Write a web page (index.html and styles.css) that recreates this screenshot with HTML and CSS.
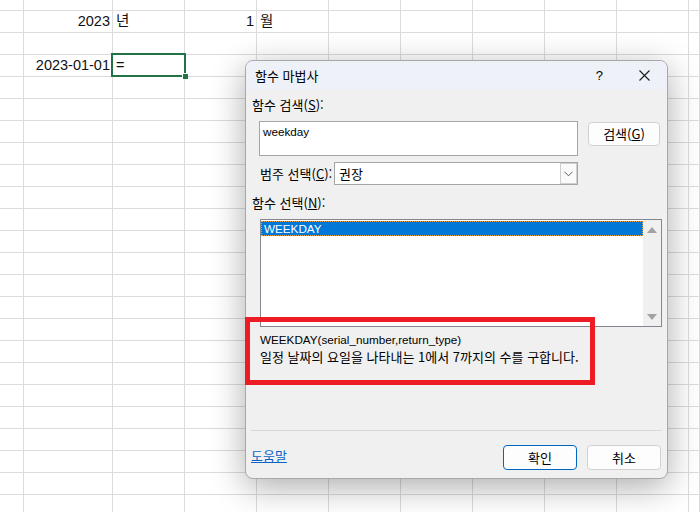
FILE: index.html
```html
<!DOCTYPE html>
<html lang="ko">
<head>
<meta charset="utf-8">
<link rel="stylesheet" href="styles.css">
</head>
<body>
<div class="sheet">
<div></div><div></div><div></div><div></div><div></div><div></div><div></div><div></div><div></div><div></div><div></div>
<div></div><div class="num">2023</div><div>년</div><div class="num">1</div><div>월</div><div></div><div></div><div></div><div></div><div></div><div></div>
<div></div><div></div><div></div><div></div><div></div><div></div><div></div><div></div><div></div><div></div><div></div>
<div></div><div class="num">2023-01-01</div><div>=</div><div></div><div></div><div></div><div></div><div></div><div></div><div></div><div></div>
<div></div><div></div><div></div><div></div><div></div><div></div><div></div><div></div><div></div><div></div><div></div>
<div></div><div></div><div></div><div></div><div></div><div></div><div></div><div></div><div></div><div></div><div></div>
<div></div><div></div><div></div><div></div><div></div><div></div><div></div><div></div><div></div><div></div><div></div>
<div></div><div></div><div></div><div></div><div></div><div></div><div></div><div></div><div></div><div></div><div></div>
<div></div><div></div><div></div><div></div><div></div><div></div><div></div><div></div><div></div><div></div><div></div>
<div></div><div></div><div></div><div></div><div></div><div></div><div></div><div></div><div></div><div></div><div></div>
<div></div><div></div><div></div><div></div><div></div><div></div><div></div><div></div><div></div><div></div><div></div>
<div></div><div></div><div></div><div></div><div></div><div></div><div></div><div></div><div></div><div></div><div></div>
<div></div><div></div><div></div><div></div><div></div><div></div><div></div><div></div><div></div><div></div><div></div>
<div></div><div></div><div></div><div></div><div></div><div></div><div></div><div></div><div></div><div></div><div></div>
<div></div><div></div><div></div><div></div><div></div><div></div><div></div><div></div><div></div><div></div><div></div>
<div></div><div></div><div></div><div></div><div></div><div></div><div></div><div></div><div></div><div></div><div></div>
<div></div><div></div><div></div><div></div><div></div><div></div><div></div><div></div><div></div><div></div><div></div>
<div></div><div></div><div></div><div></div><div></div><div></div><div></div><div></div><div></div><div></div><div></div>
<div></div><div></div><div></div><div></div><div></div><div></div><div></div><div></div><div></div><div></div><div></div>
<div></div><div></div><div></div><div></div><div></div><div></div><div></div><div></div><div></div><div></div><div></div>
<div></div><div></div><div></div><div></div><div></div><div></div><div></div><div></div><div></div><div></div><div></div>
<div></div><div></div><div></div><div></div><div></div><div></div><div></div><div></div><div></div><div></div><div></div>
<div></div><div></div><div></div><div></div><div></div><div></div><div></div><div></div><div></div><div></div><div></div>
<div></div><div></div><div></div><div></div><div></div><div></div><div></div><div></div><div></div><div></div><div></div>
</div>

<div class="selection"><span class="handle"></span></div>

<div class="dialog">
  <div class="titlebar">
    <span class="title">함수 마법사</span>
    <span class="help latin">?</span>
    <svg class="close" width="11" height="11" viewBox="0 0 11 11"><path d="M0.5 0.5 L10.5 10.5 M10.5 0.5 L0.5 10.5" stroke="#1a1a1a" stroke-width="1.1" fill="none"/></svg>
  </div>
  <div class="content">
    <div class="label">함수 검색(<u>S</u>):</div>
    <div class="search-row">
      <div class="input latin">weekday</div>
      <div class="btn search-btn">검색(<u>G</u>)</div>
    </div>
    <div class="cat-row">
      <span class="cat-label">범주 선택(<u>C</u>):</span>
      <div class="select">
        <span class="val">권장</span>
        <span class="arrow"><svg width="9" height="6" viewBox="0 0 9 6"><path d="M0.5 0.8 L4.5 4.8 L8.5 0.8" stroke="#5a5a5a" stroke-width="1" fill="none"/></svg></span>
      </div>
    </div>
    <div class="label label-fn">함수 선택(<u>N</u>):</div>
    <div class="listbox">
      <div class="items">
        <div class="item sel latin">WEEKDAY</div>
      </div>
      <div class="scroll">
        <svg width="10" height="6" viewBox="0 0 10 6"><polygon points="5,0 10,6 0,6" fill="#a3a3a3"/></svg>
        <svg width="10" height="6" viewBox="0 0 10 6"><polygon points="0,0 10,0 5,6" fill="#a3a3a3"/></svg>
      </div>
    </div>
    <div class="desc">
      <div class="latin">WEEKDAY(serial_number,return_type)</div>
      <div>일정 날짜의 요일을 나타내는 1에서 7까지의 수를 구합니다.</div>
    </div>
  </div>
  <div class="sep"></div>
  <div class="footer">
    <a class="link">도움말</a>
    <div class="btn ok">확인</div>
    <div class="btn cancel">취소</div>
  </div>
</div>

<div class="callout"></div>
</body>
</html>
```
FILE: styles.css
```css
* { box-sizing: border-box; }
html, body { margin: 0; padding: 0; }
body {
  width: 700px;
  height: 512px;
  overflow: hidden;
  position: relative;
  background: #ffffff;
  font-family: "Liberation Sans", "Noto Sans CJK KR", sans-serif;
  color: #000;
}

/* spreadsheet */
.sheet {
  display: grid;
  grid-template-columns: 24px 89px repeat(8, 72px) 1fr;
  grid-template-rows: 11px;
  grid-auto-rows: 22px;
  height: 512px;
  overflow: hidden;
  font-size: 14.5px;
}
.sheet > div {
  border-right: 1px solid #dcdcdc;
  border-bottom: 1px solid #dcdcdc;
  line-height: 21px;
  padding: 0 3px;
  white-space: nowrap;
  overflow: hidden;
  color: #111;
}
.sheet > .num { text-align: right; padding-right: 2px; }

.selection {
  position: absolute;
  left: 111px;
  top: 53px;
  width: 75px;
  height: 24px;
  border: 2px solid #217346;
}
.handle {
  position: absolute;
  right: -4px;
  bottom: -4px;
  width: 6px;
  height: 6px;
  background: #217346;
  border-left: 1px solid #fff;
  border-top: 1px solid #fff;
}

/* dialog */
.dialog {
  position: absolute;
  left: 245px;
  top: 60px;
  width: 423px;
  height: 419px;
  border: 1px solid #a8a8a8;
  border-radius: 8px;
  background: #f0f0f0;
  box-shadow: 0 8px 34px rgba(0, 0, 0, 0.33);
  display: flex;
  flex-direction: column;
  overflow: hidden;
  font-family: "Noto Sans CJK KR", "Liberation Sans", sans-serif;
  font-size: 13px;
}
.latin {
  font-family: "Liberation Sans", "Noto Sans CJK KR", sans-serif;
  font-size: 11.7px;
}
.titlebar {
  height: 29px;
  flex: none;
  background: #eef2f8;
  display: flex;
  align-items: center;
  padding: 0 17px 0 9px;
}
.title { flex: 1; line-height: 18px; }
.help { font-size: 13px; margin-right: 36px; }
.close { display: block; }

.content {
  flex: 1;
  padding: 7px 0 0 6px;
  display: flex;
  flex-direction: column;
}
.label { line-height: 16px; }
.search-row {
  display: flex;
  align-items: flex-start;
  margin: 8px 0 0 7px;
  gap: 10px;
}
.input {
  width: 319px;
  height: 35px;
  border: 1px solid #a5a5a5;
  background: #fff;
  padding: 2px 3px;
  line-height: 16px;
}
.btn {
  background: #fdfdfd;
  border: 1px solid #d0d0d0;
  border-radius: 4px;
  display: flex;
  align-items: center;
  justify-content: center;
  line-height: 16px;
}
.search-btn { width: 72px; height: 24px; margin-top: 1px; }

.cat-row {
  display: grid;
  grid-template-columns: 74px 244px;
  align-items: center;
  margin: 6px 0 0 8px;
  line-height: 16px;
}
.select {
  height: 23px;
  border: 1px solid #a5a5a5;
  background: #fff;
  display: flex;
}
.select .val { flex: 1; padding-left: 4px; line-height: 21px; }
.select .arrow {
  width: 17px;
  border: 1px solid #cfcfcf;
  background: #fafafa;
  display: flex;
  align-items: center;
  justify-content: center;
}
.label-fn { margin-top: 10px; }

.listbox {
  margin: 8px 0 0 8px;
  width: 402px;
  height: 108px;
  border: 1px solid #848790;
  background: #fff;
  display: flex;
}
.items { flex: 1; padding-top: 1px; }
.item { height: 15px; line-height: 13px; padding-left: 2px; }
.item.sel {
  background: #0078d7;
  color: #fff;
  border: 1px dotted #e8a040;
}
.scroll {
  width: 18px;
  background: #f0f0f0;
  display: flex;
  flex-direction: column;
  justify-content: space-between;
  align-items: center;
  padding: 7px 0 6px;
}
.scroll svg { display: block; }

.desc { margin: 4px 0 0 8px; line-height: 17px; }

.sep {
  flex: none;
  height: 1px;
  margin: 0 5px;
  background: #d9d9d9;
}
.footer {
  flex: none;
  height: 47px;
  display: flex;
  align-items: flex-start;
  padding: 14px 6px 0 5px;
  gap: 10px;
}
.link {
  color: #0a64c8;
  text-decoration: underline;
  margin-right: auto;
  line-height: 16px;
  padding-top: 3px;
}
.ok, .cancel { width: 74px; height: 25px; }
.ok { border-color: #0067c0; }
.callout {
  position: absolute;
  left: 245px;
  top: 317px;
  width: 350px;
  height: 68px;
  border: 5px solid #ed1c24;
}
```
